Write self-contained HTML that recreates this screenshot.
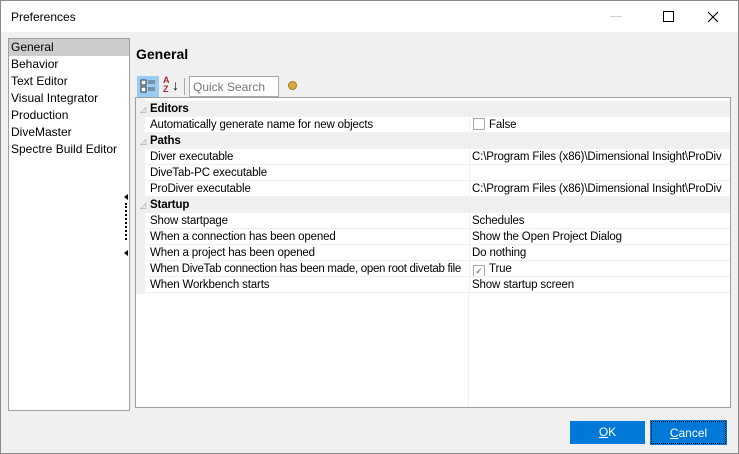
<!DOCTYPE html>
<html><head><style>
*{margin:0;padding:0;box-sizing:border-box}
body{width:739px;height:454px;overflow:hidden;font-family:"Liberation Sans",sans-serif;font-size:12px;color:#000;background:#f0f0f0;position:relative}
.win{position:absolute;left:0;top:0;width:739px;height:454px;border:1px solid #8a8a8a;border-top:none;border-bottom:1px solid #8a8a8a}
.title{position:absolute;left:0;top:0;width:739px;height:32px;background:#fff;border-top:1px solid #8a8a8a;border-left:1px solid #8a8a8a;border-right:1px solid #8a8a8a}
.title span{position:absolute;left:10px;top:9px;font-size:12px}
.abs{position:absolute}
.list{left:8px;top:38px;width:122px;height:373px;background:#fff;border:1px solid #a0a0a0}
.list div{height:17px;line-height:17px;padding-left:2px}
.list .sel{background:#cccccc}
.grid{left:135px;top:97px;width:596px;height:311px;background:#fff;border:1px solid #a0a0a0;font-size:11.5px;letter-spacing:-0.15px;overflow:hidden}
.row{position:absolute;left:0;width:594px;height:16px;line-height:17px;border-bottom:1px solid #f0f0f0}
.cat{background:#f0f0f0;font-weight:bold}
.row .l{position:absolute;left:14px;white-space:nowrap}
.row .v{position:absolute;left:333px;border-left:1px solid #f0f0f0;padding-left:2px;height:15px;width:261px;white-space:nowrap;overflow:hidden;background:#fff}
.row .a{position:absolute;left:4px;top:0;color:#999;font-size:8px;font-weight:normal}
.btn{top:421px;width:75px;height:23px;background:#0078d7;color:#fff;text-align:center;line-height:22px}
.tri{width:0;height:0;border-top:3px solid transparent;border-bottom:3px solid transparent;border-right:4px solid #000}
</style></head><body>
<div class="win"></div>
<div class="title"><span>Preferences</span>
<div class="abs" style="left:609px;top:15px;width:12px;height:1px;background:#ccc"></div>
<div class="abs" style="left:662px;top:10px;width:11px;height:11px;border:1px solid #000"></div>
<svg class="abs" style="left:706px;top:10px" width="12" height="12"><path d="M1 1L11 11M11 1L1 11" stroke="#000" stroke-width="1.1"/></svg>
</div>
<div class="abs list">
<div class="sel">General</div><div>Behavior</div><div>Text Editor</div><div>Visual Integrator</div><div>Production</div><div>DiveMaster</div><div>Spectre Build Editor</div>
</div>
<div class="abs tri" style="left:124px;top:194px"></div>
<div class="abs" style="left:125px;top:203px;width:2px;height:37px;border-left:2px dotted #000"></div>
<div class="abs tri" style="left:124px;top:250px"></div>
<div class="abs" style="left:136px;top:46px;font-weight:bold;font-size:14px">General</div>
<div class="abs" style="left:137px;top:76px;width:22px;height:21px;background:#99ccf5"></div>
<svg class="abs" style="left:140px;top:79px" width="16" height="15"><rect x="1" y="1" width="5" height="5" fill="#fff" stroke="#333"/><rect x="1" y="8" width="5" height="5" fill="#fff" stroke="#333"/><path d="M8 2h7M8 4h7M8 9h7M8 11h7" stroke="#555"/></svg>
<div class="abs" style="left:163px;top:76px;font-size:9px;line-height:9px;color:#a03030;font-weight:bold">A<br>Z</div>
<div class="abs" style="left:172px;top:77px;font-size:14px">↓</div>
<div class="abs" style="left:184px;top:78px;width:1px;height:17px;background:#aaa"></div>
<div class="abs" style="left:189px;top:76px;width:90px;height:21px;background:#fff;border:1px solid #aaa;color:#777;padding:3px 0 0 3px">Quick Search</div>
<div class="abs" style="left:288px;top:81px;width:9px;height:9px;border-radius:50%;background:#d9a93a;border:1px solid #a07820"></div>
<div class="abs grid">
<div class="abs" style="left:0;top:0;width:9px;height:196px;background:#f0f0f0"></div>
<div class="abs" style="left:332px;top:196px;width:1px;height:113px;background:#f0f0f0"></div>
<div class="row cat" style="top:3px"><span class="a">◿</span><span class="l">Editors</span></div>
<div class="row" style="top:19px"><span class="l">Automatically generate name for new objects</span><span class="v"><span style="display:inline-block;width:12px;height:12px;border:1px solid #aaa;vertical-align:-2px;margin:0 4px 0 1px"></span>False</span></div>
<div class="row cat" style="top:35px"><span class="a">◿</span><span class="l">Paths</span></div>
<div class="row" style="top:51px"><span class="l">Diver executable</span><span class="v">C:\Program Files (x86)\Dimensional Insight\ProDiv</span></div>
<div class="row" style="top:67px"><span class="l">DiveTab-PC executable</span><span class="v"></span></div>
<div class="row" style="top:83px"><span class="l">ProDiver executable</span><span class="v">C:\Program Files (x86)\Dimensional Insight\ProDiv</span></div>
<div class="row cat" style="top:99px"><span class="a">◿</span><span class="l">Startup</span></div>
<div class="row" style="top:115px"><span class="l">Show startpage</span><span class="v">Schedules</span></div>
<div class="row" style="top:131px"><span class="l">When a connection has been opened</span><span class="v">Show the Open Project Dialog</span></div>
<div class="row" style="top:147px"><span class="l">When a project has been opened</span><span class="v">Do nothing</span></div>
<div class="row" style="top:163px"><span class="l" style="letter-spacing:-0.3px">When DiveTab connection has been made, open root divetab file</span><span class="v"><span style="display:inline-block;width:12px;height:12px;border:1px solid #aaa;vertical-align:-2px;margin:0 4px 0 1px;font-size:9px;line-height:10px;text-align:center;color:#555">✓</span>True</span></div>
<div class="row" style="top:179px"><span class="l">When Workbench starts</span><span class="v">Show startup screen</span></div>
</div>
<div class="abs btn" style="left:570px"><u>O</u>K</div>
<div class="abs btn" style="left:651px;border:1px dotted #000;outline:1px solid #0078d7"><u>C</u>ancel</div>
</body></html>
